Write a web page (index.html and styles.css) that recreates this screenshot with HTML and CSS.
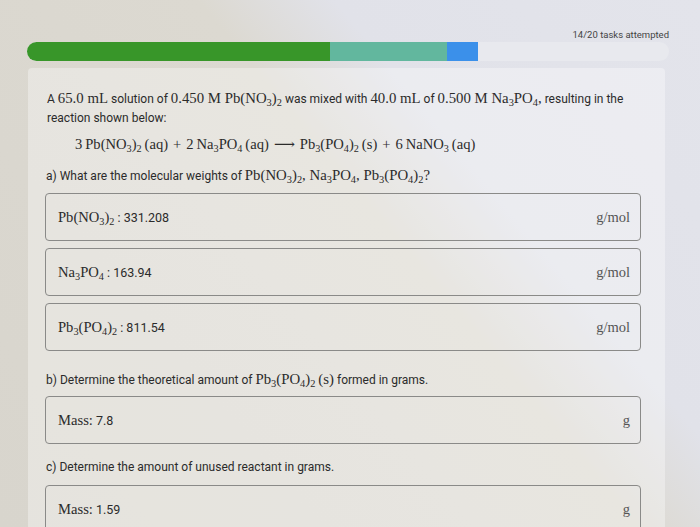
FILE: index.html
```html
<!DOCTYPE html>
<html lang="en">
<head>
<meta charset="utf-8">
<title>Stoichiometry task</title>
<link rel="stylesheet" href="styles.css">
</head>
<body>
<div class="page">
  <div class="status">14/20 tasks attempted</div>
  <div class="progress">
    <div class="seg done" style="width:47.2%"></div>
    <div class="seg partial" style="width:18.2%"></div>
    <div class="seg current" style="width:4.8%"></div>
  </div>
  <main class="card">
    <p class="intro">A <span class="m">65.0&nbsp;mL</span> solution of <span class="m">0.450&nbsp;M&nbsp;Pb(NO<sub>3</sub>)<sub>2</sub></span> was mixed with <span class="m">40.0&nbsp;mL</span> of <span class="m">0.500&nbsp;M&nbsp;Na<sub>3</sub>PO<sub>4</sub>,</span> resulting in the reaction shown below:</p>
    <p class="equation m">3&thinsp;Pb(NO<sub>3</sub>)<sub>2</sub>&thinsp;(aq)<span class="op">+</span>2&thinsp;Na<sub>3</sub>PO<sub>4</sub>&thinsp;(aq)<span class="op">&#10230;</span>Pb<sub>3</sub>(PO<sub>4</sub>)<sub>2</sub>&thinsp;(s)<span class="op">+</span>6&thinsp;NaNO<sub>3</sub>&thinsp;(aq)</p>

    <p class="q q-a">a) What are the molecular weights of <span class="m">Pb(NO<sub>3</sub>)<sub>2</sub>, Na<sub>3</sub>PO<sub>4</sub>, Pb<sub>3</sub>(PO<sub>4</sub>)<sub>2</sub>?</span></p>
    <div class="answers">
      <div class="answer"><span class="label"><span class="m">Pb(NO<sub>3</sub>)<sub>2</sub></span> : 331.208</span><span class="unit m">g/mol</span></div>
      <div class="answer"><span class="label"><span class="m">Na<sub>3</sub>PO<sub>4</sub></span> : 163.94</span><span class="unit m">g/mol</span></div>
      <div class="answer"><span class="label"><span class="m">Pb<sub>3</sub>(PO<sub>4</sub>)<sub>2</sub></span> : 811.54</span><span class="unit m">g/mol</span></div>
    </div>

    <p class="q q-b">b) Determine the theoretical amount of <span class="m">Pb<sub>3</sub>(PO<sub>4</sub>)<sub>2</sub>&thinsp;(s)</span> formed in grams.</p>
    <div class="answer single-b"><span class="label"><span class="m">Mass:</span> 7.8</span><span class="unit m">g</span></div>

    <p class="q q-c">c) Determine the amount of unused reactant in grams.</p>
    <div class="answer single-c"><span class="label"><span class="m">Mass:</span> 1.59</span><span class="unit m">g</span></div>
  </main>
</div>
</body>
</html>
```

FILE: styles.css
```css
html, body {
  margin: 0;
  height: 527px;
  overflow: hidden;
}

body {
  font-family: Roboto, "Liberation Sans", sans-serif;
  color: #2b2b2b;
  background: linear-gradient(50deg, #d8d5cd 0%, #dcd9d1 56%, #e1e2e9 68%, #e3e4eb 100%);
}

.page {
  padding: 29px 31px 0 27px;
}

.status {
  text-align: right;
  font-size: 9.5px;
  line-height: 12px;
  color: #444;
}

.progress {
  margin-top: 1px;
  height: 19px;
  border-radius: 10px;
  background: #e8e9ee;
  display: flex;
  overflow: hidden;
}

.seg {
  height: 100%;
}

.seg.done { background: #389629; }
.seg.partial { background: #62b79e; }
.seg.current { background: #3b90ea; }

.card {
  margin: 7px 4px 0 1px;
  padding: 22px 24px 40px 17px;
  background: rgba(255, 255, 255, 0.34);
  border-radius: 4px;
  min-height: 500px;
}

p {
  margin: 0;
}

.m {
  font-family: "Liberation Serif", "DejaVu Serif", serif;
  font-size: 14.8px;
  line-height: 1;
}

.m .m {
  font-size: 1em;
}

sub {
  font-size: 0.7em;
  vertical-align: -0.28em;
  line-height: 0;
}

.intro {
  padding-left: 2px;
  font-size: 12px;
  line-height: 19px;
}

.equation {
  margin-top: 6px;
  padding-left: 30px;
  font-size: 14.6px;
  line-height: 20px;
}

.op {
  margin: 0 5px;
}

.q {
  padding-left: 1px;
  font-size: 12px;
  line-height: 19px;
}

.q-a { margin-top: 13px; }
.q-b { margin-top: 20px; }
.q-c { margin-top: 14px; }

.answers {
  margin-top: 7px;
  display: flex;
  flex-direction: column;
  gap: 7px;
}

.answer {
  height: 46px;
  border: 1px solid #8a8a88;
  border-radius: 4px;
  display: flex;
  align-items: center;
  justify-content: space-between;
  padding: 0 10px 0 12px;
  font-size: 12.5px;
}

.answer .m {
  font-size: 14.6px;
}

.single-b { margin-top: 6px; }
.single-c { margin-top: 8px; }

.label {
  color: #2b2b2b;
}

.answer .unit {
  color: #555;
  font-size: 14.5px;
}
```
